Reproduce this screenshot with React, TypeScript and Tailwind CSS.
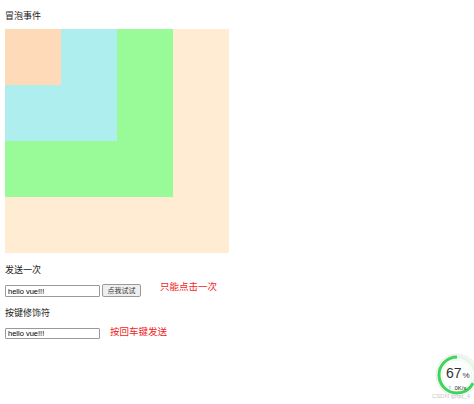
import React from "react";

export default function App() {
  const cjk = { fontFamily: '"Noto Sans CJK SC", "Liberation Sans", sans-serif' };
  return (
    <div className="relative w-[474px] h-[404px] bg-white overflow-hidden text-[#222]" style={cjk}>
      <div className="pl-[5px]">
        <div className="h-[29px] flex items-center pt-[1px] text-[9px] leading-none">冒泡事件</div>
        <div className="w-[224px] h-[224px] bg-[#ffecd3]">
          <div className="w-[168px] h-[168px] bg-[#98fb98]">
            <div className="w-[112px] h-[112px] bg-[#afeeee]">
              <div className="w-[56px] h-[56px] bg-[#ffdab9]" />
            </div>
          </div>
        </div>
        <div className="h-[31px] flex items-center pt-[1px] text-[9px] leading-none">发送一次</div>
        <div className="h-[13px] flex items-start">
          <input
            readOnly
            value="hello vue!!!"
            className="w-[95px] h-[12px] mt-[1px] border border-[#999] rounded-[1px] px-[2px] text-[7.5px] leading-none text-black outline-none"
            style={{ fontFamily: '"Liberation Sans", Arial, sans-serif' }}
          />
          <button className="ml-[2px] w-[39px] h-[13px] border border-[#999] rounded-[2px] bg-[#efefef] text-[7px] leading-none text-[#333]">
            点我试试
          </button>
          <span className="ml-[19px] -mt-[4px] text-[9.5px] leading-[12px] text-[#f21c1c]">只能点击一次</span>
        </div>
        <div className="h-[30px] flex items-center pt-[1px] text-[9px] leading-none">按键修饰符</div>
        <div className="h-[12px] flex items-start">
          <input
            readOnly
            value="hello vue!!!"
            className="w-[95px] h-[11px] mt-[1px] border border-[#999] rounded-[1px] px-[2px] text-[7.5px] leading-none text-black outline-none"
            style={{ fontFamily: '"Liberation Sans", Arial, sans-serif' }}
          />
          <span className="ml-[10px] -mt-[2px] text-[9.5px] leading-[12px] text-[#f21c1c]">按回车键发送</span>
        </div>
      </div>

      <div className="absolute left-[434px] top-[352px] w-[46px] h-[46px]">
        <svg width="46" height="46" viewBox="0 0 46 46" className="absolute inset-0">
          <circle cx="23" cy="23" r="21.5" fill="#efefef" />
          <circle cx="23" cy="23" r="20" fill="white" />
          <circle cx="23" cy="23" r="18" fill="none" stroke="#e3f7e6" strokeWidth="3" />
          <circle
            cx="23"
            cy="23"
            r="18"
            fill="none"
            stroke="#3fd45b"
            strokeWidth="3"
            strokeDasharray={`${2 * Math.PI * 18 * 0.67} ${2 * Math.PI * 18}`}
            transform="translate(46 0) scale(-1 1) rotate(-90 23 23)"
          />
          <circle cx="23" cy="23" r="15" fill="none" stroke="#d8f5dc" strokeWidth="0.6" />
        </svg>
        <div
          className="absolute left-[12px] top-[14px] flex items-baseline text-[#333] leading-none"
          style={{ fontFamily: '"Liberation Sans", Arial, sans-serif' }}
        >
          <span className="text-[14px]">67</span>
          <span className="text-[8px] ml-[1px]">%</span>
        </div>
        <div
          className="absolute left-[14px] top-[32px] flex items-center text-[6px] leading-none text-[#333]"
          style={{ fontFamily: '"Liberation Sans", Arial, sans-serif' }}
        >
          <span className="text-[#3a8ee6] text-[7px] mr-[3px]">↑</span>
          <span>0K/s</span>
        </div>
      </div>
      <div
        className="absolute left-[432px] top-[393px] text-[6px] leading-none text-[#c8c8c8]"
        style={{ fontFamily: '"Liberation Sans", Arial, sans-serif' }}
      >
        CSDN @qq_4
      </div>
    </div>
  );
}
